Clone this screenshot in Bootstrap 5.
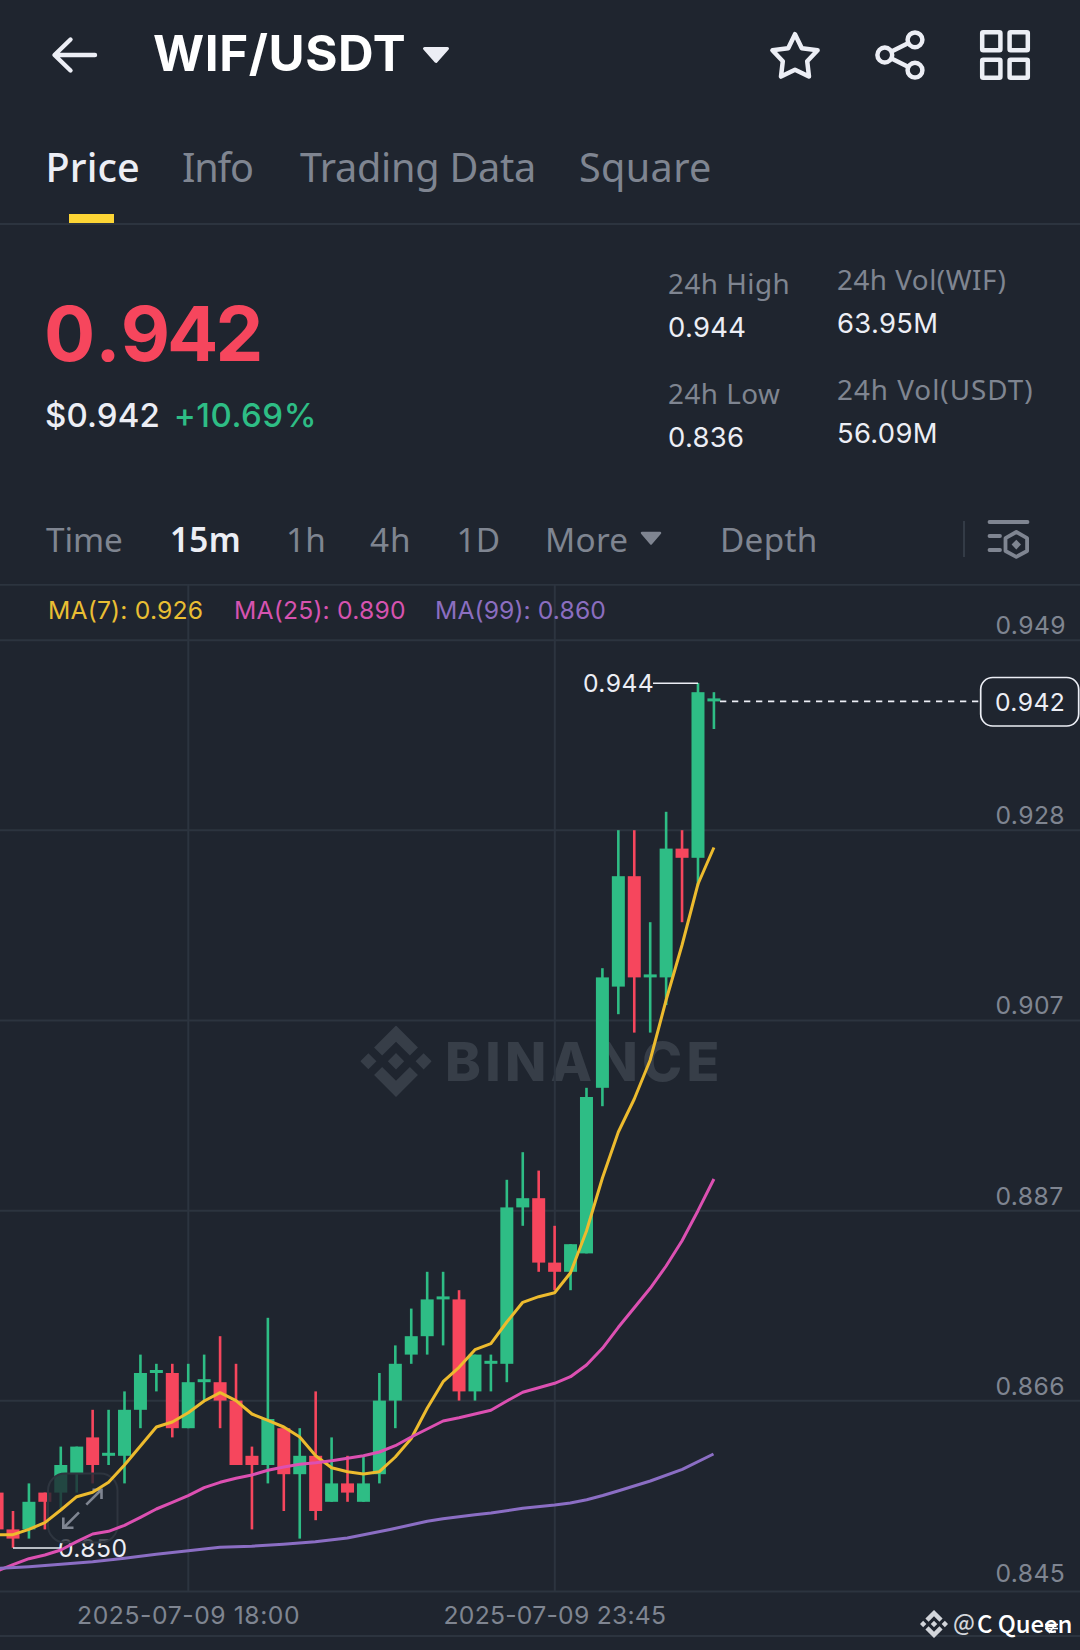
<!DOCTYPE html>
<html lang="en">
<head>
<meta charset="utf-8">
<meta name="viewport" content="width=device-width, initial-scale=1">
<title>WIF/USDT</title>
<link href="https://cdn.jsdelivr.net/npm/bootstrap@5.3.0/dist/css/bootstrap.min.css" rel="stylesheet">
<style>
:root{--bg:#1f252f;--line:#2c343f;--muted:#7f8591;--fg:#eceef5;--up:#2ebd85;--down:#f6465d;--y:#e9be33;--p:#d653b0;--v:#8b6ec0}
body{background:var(--bg);color:var(--fg);font-family:"Noto Sans","Open Sans",sans-serif;width:1080px;height:1650px;overflow:hidden}
svg{display:block}
.topbar{height:104px;padding:0 49px 0 51px}
.pair{font:700 49.3px/60px Inter,sans-serif;letter-spacing:.6px;color:#fff;margin:1px 0 0 55px}
.pair-caret{margin:6px 0 0 16px}
.tools{gap:53px;margin-top:6px}
.back{margin-top:6px}
.tabs{height:121px;padding-left:45.5px;border-bottom:2px solid var(--line)}
.tabs .nav-link{font-size:39.6px;line-height:60px;padding:33px 0 0;color:var(--muted);position:relative}
.tabs .nav-link.active{color:var(--fg);font-weight:500}
.tabs .nav-link.active::after{content:"";position:absolute;left:23.5px;bottom:0;width:45px;height:9px;background:#fcd535}
.tabs .nav-item{flex:none}
.tabs .nav-item:nth-child(1){width:136.5px;letter-spacing:.15px}
.tabs .nav-item:nth-child(2){width:118px;letter-spacing:-1.2px}
.tabs .nav-item:nth-child(3){width:279px;letter-spacing:-.25px}
.tabs .nav-item:nth-child(4){letter-spacing:.35px}
.stats{height:267px;padding-left:45px}
.quote{width:623px;padding-top:63px;font-family:Inter,sans-serif}
.last{font-size:76px;font-weight:650;line-height:90px;letter-spacing:-3px;color:var(--down);margin-left:-1px}
.last .dot{margin:0 3px}
.sub{font-size:33px;line-height:44px;margin-top:15px;font-weight:550;gap:14px;letter-spacing:.1px}
.sub .pct{color:var(--up);letter-spacing:.5px;font-weight:500}
.st{width:169px;font-size:27.8px;line-height:43px;white-space:nowrap}
.st dt{font-weight:400;color:var(--muted);letter-spacing:.5px}
.st dd{margin:0 0 24px;padding-top:1px;line-height:42px;font-family:Inter,sans-serif;font-size:27.4px;letter-spacing:.3px}
.st-a{padding-top:37px}.st-b{padding-top:33px}
.st-b dt:last-of-type{letter-spacing:1px}
.ivs{height:92px;padding:1px 50px 0 46px;font-size:33.3px;line-height:50px;color:var(--muted)}
.ivs .iv{flex:none;letter-spacing:.3px}
.ivs .iv:nth-child(1){width:124px;letter-spacing:-.1px}
.ivs .iv:nth-child(2){width:116px;color:var(--fg);font-weight:600}
.ivs .iv:nth-child(3){width:84px}
.ivs .iv:nth-child(4){width:86.5px;letter-spacing:.9px}
.ivs .iv:nth-child(5){width:88.500px}
.ivs .iv:nth-child(6){width:175px}
.ivs .iv:nth-child(7){width:243px}
.ivs .more-caret{margin:0 0 0 12px}
.sep{width:2px;height:36px;background:#333b46;margin-right:22px}
.chart{height:1066px}
.legend{left:48px;top:6px;font:24.7px/40px Inter,sans-serif;letter-spacing:.2px;white-space:nowrap}
.legend span{flex:none}
.legend span:nth-child(1){width:186px;color:var(--y)}
.legend span:nth-child(2){width:201px;color:var(--p)}
.legend span:nth-child(3){color:var(--v);letter-spacing:.1px}
.chart text{font-family:Inter,sans-serif;font-size:24.7px;letter-spacing:.4px}
.chart .ax{fill:var(--muted)}
.chart .wh{fill:var(--fg)}
.chart .brand{font:800 54px Inter,sans-serif;letter-spacing:4.3px;fill:#373e48}
.chart .user{font:500 24px "Noto Sans CJK SC","Noto Sans",sans-serif;letter-spacing:-.1px;fill:#fff}
.chart .at{fill:#d2d5da;font-size:22.5px}
</style>
<script src="https://cdn.jsdelivr.net/npm/bootstrap@5.3.0/dist/js/bootstrap.bundle.min.js"></script>
</head>
<body>
<svg width="0" height="0" class="position-absolute"><defs>
<symbol id="bnb" viewBox="0 0 126.6 126.6"><path d="M38.73 53.2l24.59-24.58 24.6 24.6 14.3-14.31L63.32 0 24.42 38.9zM0 63.31L14.3 49l14.31 14.31-14.31 14.3zM38.73 73.41L63.32 98l24.6-24.6 14.31 14.29-38.91 38.92-38.9-38.9zM98 63.31L112.3 49l14.3 14.3-14.3 14.32zM77.83 63.3L63.32 48.78 48.81 63.28l14.51 14.5z"/></symbol>
</defs></svg>

<header class="topbar d-flex align-items-center">
  <svg class="back" width="47" height="40" viewBox="51 35 47 40" fill="none" stroke="#eceef5" stroke-width="4.4" stroke-linecap="round" stroke-linejoin="round"><path d="M95 55H55M70.500 39.500 54.500 55 70.500 70.500"/></svg>
  <div class="pair">WIF/USDT</div>
  <svg class="pair-caret" width="28" height="18" viewBox="0 0 28 18"><path d="M2.500 2.500H25.500L14 15.500Z" fill="#eceef5" stroke="#eceef5" stroke-width="3" stroke-linejoin="round"/></svg>
  <div class="tools d-flex align-items-center ms-auto">
    <svg width="52" height="52" viewBox="769 29 52 52" fill="none" stroke="#eceef5" stroke-width="4.500" stroke-linejoin="round"><path d="M795 34.200 801.800 48.300 817.600 50.300 807.200 61.200 809 76.600 795 69.700 781 76.600 782.800 61.200 772.400 50.300 788.200 48.300Z"/></svg>
    <svg width="52" height="52" viewBox="874 29 52 52" fill="none" stroke="#eceef5" stroke-width="4.500"><circle cx="884.800" cy="55" r="7.400"/><circle cx="915" cy="39.800" r="7.400"/><circle cx="915" cy="70.200" r="7.400"/><path d="M891.500 51.500 908.500 43M891.500 58.500 908.500 67"/></svg>
    <svg width="52" height="52" viewBox="979 29 52 52" fill="none" stroke="#eceef5" stroke-width="4.500"><rect x="982.200" y="32.200" width="18.200" height="18" rx="1"/><rect x="1009.600" y="32.200" width="18.200" height="18" rx="1"/><rect x="982.200" y="59.800" width="18.200" height="18" rx="1"/><rect x="1009.600" y="59.800" width="18.200" height="18" rx="1"/></svg>
  </div>
</header>

<ul class="nav tabs flex-nowrap align-items-stretch">
  <li class="nav-item"><a class="nav-link active h-100" href="#">Price</a></li>
  <li class="nav-item"><a class="nav-link h-100" href="#">Info</a></li>
  <li class="nav-item"><a class="nav-link h-100" href="#">Trading Data</a></li>
  <li class="nav-item"><a class="nav-link h-100" href="#">Square</a></li>
</ul>

<section class="stats d-flex">
  <div class="quote">
    <div class="last">0<span class="dot">.</span>942</div>
    <div class="sub d-flex"><span>$0.942</span><span class="pct">+10.69%</span></div>
  </div>
  <dl class="st st-a mb-0"><dt>24h High</dt><dd>0.944</dd><dt>24h Low</dt><dd>0.836</dd></dl>
  <dl class="st st-b mb-0"><dt>24h Vol(WIF)</dt><dd>63.95M</dd><dt>24h Vol(USDT)</dt><dd>56.09M</dd></dl>
</section>

<div class="ivs d-flex align-items-center">
  <div class="iv">Time</div><div class="iv">15m</div><div class="iv">1h</div><div class="iv">4h</div><div class="iv">1D</div>
  <div class="iv d-flex align-items-center">More<svg class="more-caret" width="22" height="15" viewBox="0 0 22 15"><path d="M2 2H20L11 12.500Z" fill="#7f8591" stroke="#7f8591" stroke-width="2.500" stroke-linejoin="round"/></svg></div>
  <div class="iv">Depth</div>
  <div class="sep"></div>
  <svg width="43" height="40" viewBox="986.500 519 43 40" fill="none" stroke="#7f8591" stroke-width="3.800" stroke-linecap="round" stroke-linejoin="round"><path d="M989 522H1027M989 536H999.500M989 550H999.500"/><path d="M1015.800 532 1026.600 538.200V551L1015.800 556.800 1005 551V538.200Z"/><path d="M1015.800 539.800 1020.500 544.600 1015.800 549.400 1011.100 544.600Z" fill="#7f8591" stroke="none"/></svg>
</div>

<main class="chart position-relative">
  <svg id="kline" width="1080" height="1066" viewBox="0 584 1080 1066"></svg>
  <div class="legend d-flex position-absolute"><span>MA(7): 0.926</span><span>MA(25): 0.890</span><span>MA(99): 0.860</span></div>
</main>

<script>
// Prices are in thousandths: [up, high, bodyTop, bodyBottom, low]
const candles = [
[0,856,856,852,852],[0,854,852,851,850],[1,857,855,852,851],[0,856,856,855,852],[1,861,859,856,854],
[1,861,861,858,856],[0,865,862,859,857],[1,865,860,860,859],[1,867,865,860,857],[1,871,869,865,863],
[1,870,869,869,867],[0,870,869,863,862],[1,870,868,863,863],[1,871,868,868,866],[0,873,868,866,863],
[0,870,866,859,859],[0,861,860,859,852],[1,875,864,859,857],[0,863,863,858,854],[1,863,860,858,851],
[0,867,860,854,853],[1,862,857,855,855],[0,860,857,856,855],[1,860,857,855,855],[1,869,866,858,857],
[1,872,870,866,863],[1,876,873,871,870],[1,880,877,873,871],[1,880,877,877,872],[0,878,877,867,866],
[1,871,871,867,866],[1,871,870,870,867],[1,890,887,870,868],[1,893,888,887,885],[0,891,888,881,880],
[0,885,881,880,878],[1,883,883,880,878],[1,900,899,882,882],[1,913,912,900,898],[1,928,923,911,908],
[0,928,923,912,906],[1,918,912,912,906],[1,930,926,912,909],[0,928,926,925,918],[1,944,943,925,922],
[1,943,942,942,939]];
const X = i => 13 + 15.93 * i, Y = p => 683 + (944 - p) * 9.2;
const up = '#2ebd85', down = '#f6465d', line = '#2c343f';
let s = '';
for (const y of [584.7, 640.3, 830.3, 1020.5, 1210.7, 1400.7, 1591.5, 1636])
  s += `<path d="M0 ${y}H1080" stroke="${line}" stroke-width="2"/>`;
s += `<use href="#bnb" x="360.300" y="1025.600" width="71.400" height="71.400" fill="#373e48"/><text class="brand" x="445" y="1081">BINANCE</text>`;
for (const x of [188.3, 554.8]) s += `<path d="M${x} 584V1591" stroke="${line}" stroke-width="2"/>`;
candles.forEach(([u, h, t, b, l], k) => {
  const x = X(k - 1), c = u ? up : down;
  s += `<rect x="${x - 1.3}" y="${Y(h)}" width="2.600" height="${Y(l) - Y(h)}" fill="${c}"/>`;
  s += t === b ? `<rect x="${x - 6.5}" y="${Y(b) - 3}" width="13" height="3" fill="${c}"/>`
               : `<rect x="${x - 6.5}" y="${Y(t)}" width="13" height="${Y(b) - Y(t)}" fill="${c}"/>`;
});
// High / low markers and the last price line
s += `<path d="M653 683.300H698M13 1548H60" stroke="#eceef5" stroke-width="1.600"/>
<text class="wh" x="583" y="692">0.944</text><text class="wh" x="58" y="1556.500">0.850</text>
<path d="M720 701.400H980" stroke="#eceef5" stroke-width="1.600" stroke-dasharray="6.300 5.700"/>
<rect x="980.700" y="677.500" width="98" height="48.500" rx="12" fill="#1f252f" stroke="#eceef5" stroke-width="1.700"/>
<text class="wh" x="995" y="711">0.942</text>`;
[['0.949',634],['0.928',824],['0.907',1014],['0.887',1204.5],['0.866',1394.5],['0.845',1582]].forEach(([t, y]) => s += `<text class="ax" x="995.500" y="${y}">${t}</text>`);
s += `<text class="ax" x="77" y="1624" textLength="223">2025-07-09 18:00</text><text class="ax" x="443.500" y="1624" textLength="223">2025-07-09 23:45</text>`;
// Full-screen button
s += `<rect x="48" y="1473.500" width="69.500" height="69" rx="17" fill="#1f252f" fill-opacity=".78" stroke="#2e353f" stroke-width="2"/>
<g fill="none" stroke="#7f8591" stroke-width="2.600"><path d="M86.300 1504.700 101 1490M92.500 1489.700H101.500V1499"/><path d="M79 1512.300 64 1527.300M63.300 1517.500V1527.800H73.500"/></g>`;
// Moving averages: one y value per candle
const ma7 = [1534.7,1534.7,1529.3,1522.7,1510,1496.7,1492.3,1482.3,1465,1446,1427,1422,1412.7,1401,1392.7,1400.7,1414,1420.3,1427,1437,1455.7,1467.7,1471.7,1474,1471.7,1457,1438.5,1408.3,1381.7,1367.3,1349.7,1343.7,1322,1302.3,1296.7,1292.7,1272.7,1231,1178,1132,1099,1060,1000,945,884,847.5];
const ma25 = [1571,1564.7,1558.7,1555,1550,1541.7,1534,1531.3,1525.3,1517.3,1509,1502.3,1495.7,1487.7,1482.3,1478.3,1475,1470.3,1467,1464.3,1462.7,1460.7,1458.3,1455.7,1452,1445.7,1437,1429,1421,1417.7,1414,1410.3,1401,1392.3,1387.7,1383.3,1376.7,1365,1348.3,1327.3,1307.7,1288.3,1266,1240.7,1210.7,1179];
const ma99 = [[0,1568.3],[29,1566.7],[61,1564.3],[92.6,1561.7],[124.5,1558.3],[156.3,1554.3],[188.3,1550.7],[220,1547.3],[251.700,1546.2],[283.300,1544.3],[315.300,1541.7],[347.300,1538],[390,1529.5],[427.300,1521.3],[443,1518.7],[475,1514.7],[491,1513],[522.700,1508.3],[554.700,1505],[570.300,1503],[586.700,1499.7],[602.700,1495.5],[618.700,1490.7],[650.300,1481],[682.300,1469.3],[713.500,1454]];
const poly = (p, c) => `<polyline points="${p.map(a => a.join()).join(' ')}" fill="none" stroke="${c}" stroke-width="3" stroke-linejoin="round"/>`;
const seq = m => m.map((y, k) => [X(k - 1), y]);
s += poly(seq(ma7), '#edbb2e') + poly(seq(ma25), '#dc50b2') + poly(ma99, '#8b6ec4');
// Author tag
s += `<use href="#bnb" x="920" y="1610" width="28" height="28" fill="#d2d5da"/><text class="user at" x="953" y="1631">@</text><text class="user" x="977" y="1632.500">C Queen</text>
<path d="M1045 1624.500H1058M1045 1628.500H1058M1055 1625 1049 1633M1052 1632H1056" stroke="#fff" stroke-width="1.500" fill="none"/>`;
document.getElementById('kline').innerHTML = s;
</script>
</body>
</html>
